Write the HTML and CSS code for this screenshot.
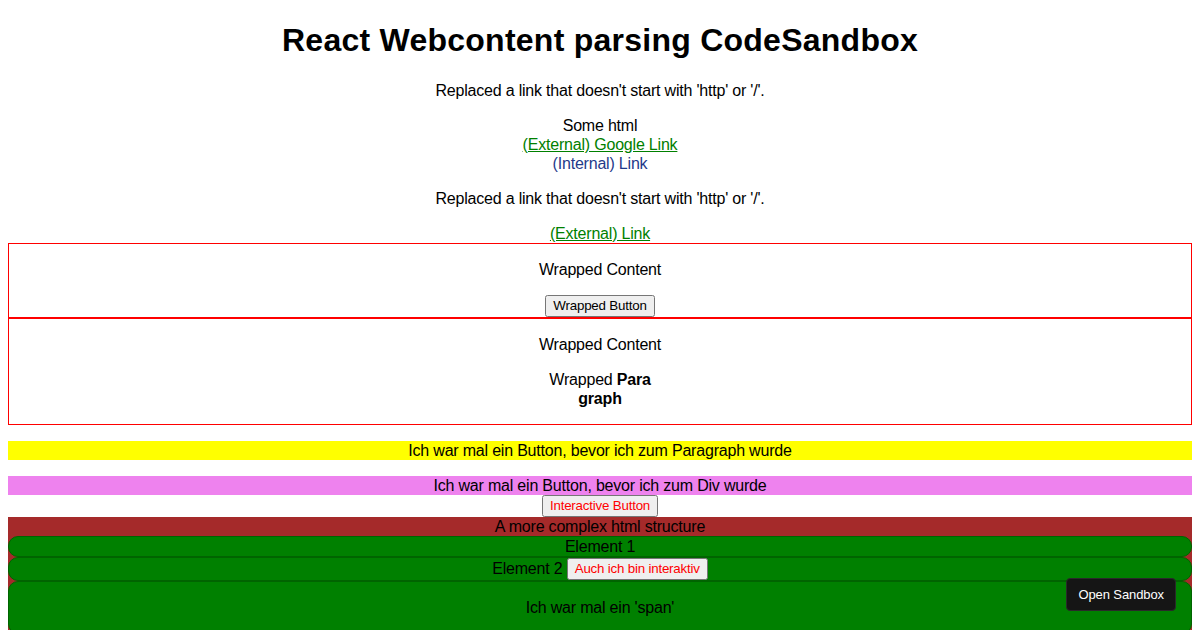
FILE: index.html
```html
<!DOCTYPE html>
<html lang="de">
<head>
  <meta charset="UTF-8" />
  <title>React Webcontent parsing CodeSandbox</title>
  <link rel="stylesheet" href="styles.css">
</head>
<body>

  <div class="App">
    <h1>React Webcontent parsing CodeSandbox</h1>

    <p>Replaced a link that doesn't start with 'http' or '/'.</p>

    <p>
      Some html<br />
      <a class="external" href="#">(External) Google Link</a><br />
      <a class="internal" href="#">(Internal) Link</a>
    </p>

    <p>Replaced a link that doesn't start with 'http' or '/'.</p>

    <div><a class="external" href="#">(External) Link</a></div>

    <div class="wrapper">
      <p>Wrapped Content</p>
      <button>Wrapped Button</button>
    </div>

    <div class="wrapper">
      <p>Wrapped Content</p>
      <p>Wrapped <b>Para<br />graph</b></p>
    </div>

    <p class="yellow">Ich war mal ein Button, bevor ich zum Paragraph wurde</p>

    <div class="violet">Ich war mal ein Button, bevor ich zum Div wurde</div>
    <button class="interactive">Interactive Button</button>

    <div class="complex">
      A more complex html structure
      <div class="element">Element 1</div>
      <div class="element">Element 2 <button class="interactive">Auch ich bin interaktiv</button></div>
      <div class="element">
        <p>Ich war mal ein 'span'</p>
      </div>
    </div>
  </div>

  <button class="sandbox">Open Sandbox</button>

</body>
</html>
```

FILE: styles.css
```css
body {
  font-family: "Liberation Sans", Arial, sans-serif;
  margin: 0 8px 8px;
  padding-top: 1px;
  line-height: 19px;
  letter-spacing: -0.2px;
}

.App {
  text-align: center;
}

h1 {
  line-height: normal;
  letter-spacing: 0.25px;
}

a.external {
  color: green;
}

a.internal {
  color: #1f3a8a;
  text-decoration: none;
}

button {
  font-family: "Liberation Sans", Arial, sans-serif;
  font-size: 13.33px;
  letter-spacing: -0.2px;
  height: 22px;
  padding: 1px 6px;
}

.wrapper {
  border: 1px solid red;
}

.yellow {
  background-color: yellow;
}

.violet {
  background-color: violet;
}

.interactive {
  color: red;
}

.complex {
  background-color: brown;
}

.element {
  background-color: green;
  border: 1px solid darkgreen;
  border-radius: 10px;
}

.sandbox {
  position: fixed;
  right: 24px;
  bottom: 19px;
  height: auto;
  padding: 8px 11px;
  background: #151515;
  color: #fff;
  border: 1px solid #2a2a2a;
  border-radius: 4px;
  font-size: 13px;
  letter-spacing: -0.1px;
}
```
